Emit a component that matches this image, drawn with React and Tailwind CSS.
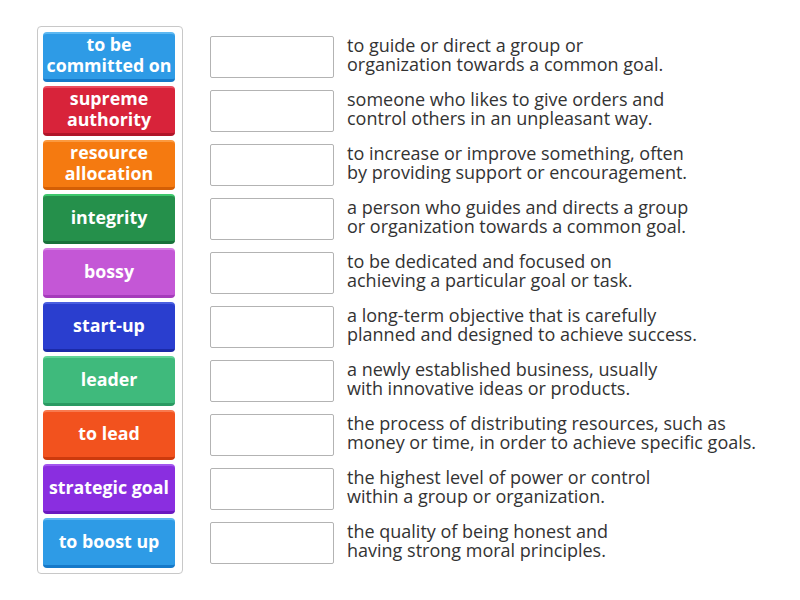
import React from 'react';

const items = [
    { label: ['to be', 'committed on'], color: 'bg-[#2e9be6] border-t-[#5cb8f2] border-b-[#1679c9]', def: ['to guide or direct a group or', 'organization towards a common goal.'] },
    { label: ['supreme', 'authority'], color: 'bg-[#d8233a] border-t-[#ec4d5f] border-b-[#b01529]', def: ['someone who likes to give orders and', 'control others in an unpleasant way.'] },
    { label: ['resource', 'allocation'], color: 'bg-[#f57a10] border-t-[#fb9a40] border-b-[#d45f05]', def: ['to increase or improve something, often', 'by providing support or encouragement.'] },
    { label: ['integrity'], color: 'bg-[#25904b] border-t-[#3ec86c] border-b-[#18703a]', def: ['a person who guides and directs a group', 'or organization towards a common goal.'] },
    { label: ['bossy'], color: 'bg-[#c457d6] border-t-[#d77ee6] border-b-[#a63bbb]', def: ['to be dedicated and focused on', 'achieving a particular goal or task.'] },
    { label: ['start-up'], color: 'bg-[#2a3ecf] border-t-[#4a5fe0] border-b-[#1b2aa8]', def: ['a long-term objective that is carefully', 'planned and designed to achieve success.'] },
    { label: ['leader'], color: 'bg-[#3fba7c] border-t-[#62d497] border-b-[#2a9a62]', def: ['a newly established business, usually', 'with innovative ideas or products.'] },
    { label: ['to lead'], color: 'bg-[#f2521e] border-t-[#f87a4f] border-b-[#cc3a0d]', def: ['the process of distributing resources, such as', 'money or time, in order to achieve specific goals.'] },
    { label: ['strategic goal'], color: 'bg-[#8a2ee0] border-t-[#a456ee] border-b-[#6a18c0]', def: ['the highest level of power or control', 'within a group or organization.'] },
    { label: ['to boost up'], color: 'bg-[#2e9be6] border-t-[#5cb8f2] border-b-[#1679c9]', def: ['the quality of being honest and', 'having strong moral principles.'] },
];

const App = () => {
    return (
        <div className="w-[800px] h-[600px] bg-white pl-[37px] pt-[26px] flex items-start" style={{ fontFamily: '"Open Sans", "Liberation Sans", sans-serif' }}>
            <div className="w-[146px] border border-[#c8c8c8] rounded-[4px] p-[5px] flex flex-col gap-[4px]">
                {items.map((it, i) => (
                    <div
                        key={i}
                        className={`w-[132px] h-[50px] rounded-[4px] border-t-2 border-b-[3px] pb-[3px] flex flex-col items-center justify-center text-white font-bold text-[17.8px] leading-[21px] ${it.color}`}
                    >
                        {it.label.map((l, j) => <span key={j}>{l}</span>)}
                    </div>
                ))}
            </div>
            <div className="ml-[27px] pt-[6px] flex flex-col gap-[4px]">
                {items.map((it, i) => (
                    <div key={i} className="h-[50px] flex items-center">
                        <div className="w-[124px] h-[42px] border border-[#b3b3b3] rounded-[2px] bg-white shrink-0" />
                        <div className="ml-[13px] -mt-[4px] text-[18px] leading-[19.5px] text-[#333333] whitespace-nowrap">
                            {it.def.map((d, j) => <div key={j}>{d}</div>)}
                        </div>
                    </div>
                ))}
            </div>
        </div>
    );
};

export default App;
